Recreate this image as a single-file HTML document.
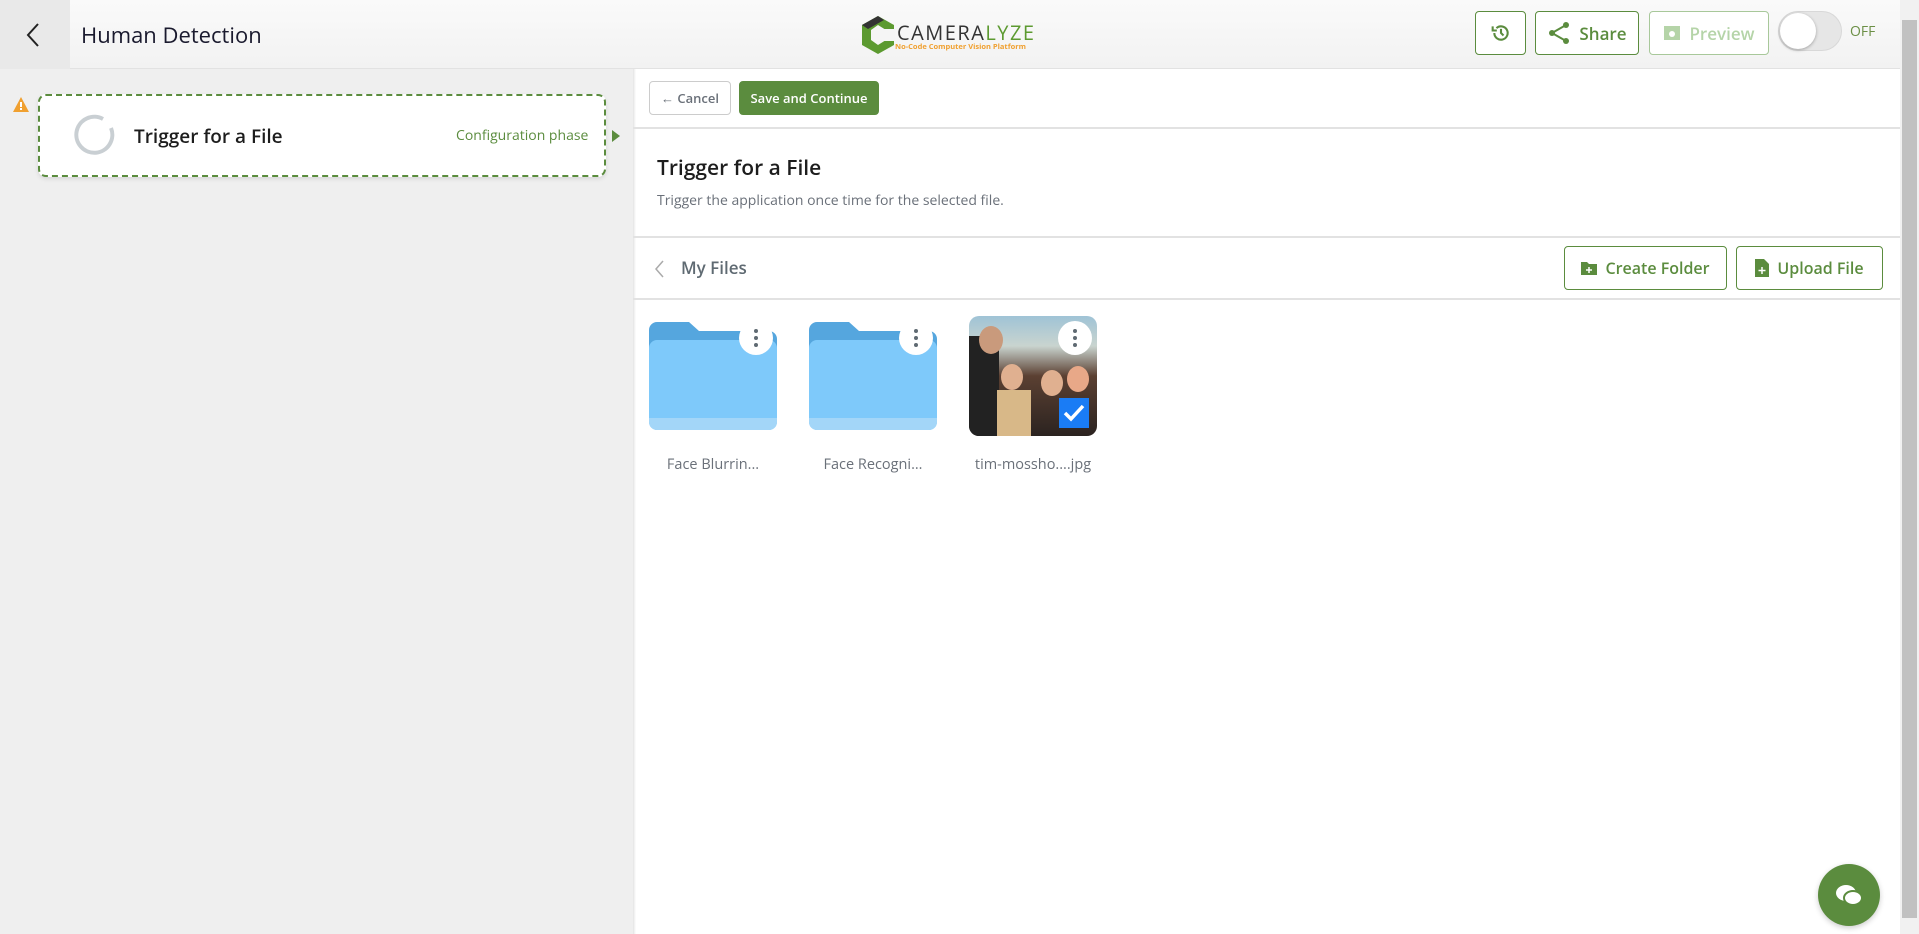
<!DOCTYPE html>
<html><head><meta charset="utf-8"><style>
*{box-sizing:border-box;margin:0;padding:0}
body{width:1919px;height:934px;overflow:hidden;font-family:"Open Sans","Liberation Sans",sans-serif;background:#fff;position:relative}
.abs{position:absolute}
.hdr{left:0;top:0;width:1900px;height:69px;background:linear-gradient(#fafafa,#f2f2f2);border-bottom:1px solid #e2e2e2}
.btn{position:absolute;border:1.5px solid #5b8c3e;border-radius:4px;background:#fff;color:#5b8c3e;font-weight:600;font-size:17px;display:flex;align-items:center;justify-content:center;gap:8px}
.folder{position:absolute;width:128px;height:108px}
.dots{position:absolute;width:34px;height:34px;border-radius:50%;background:#fff;display:flex;flex-direction:column;align-items:center;justify-content:center;gap:3px}
.dots i{width:4px;height:4px;border-radius:50%;background:#5f6a72;display:block}
.lbl{position:absolute;width:128px;text-align:center;font-size:14.5px;color:#6a7079;top:455px}
</style></head><body>
<div class="abs hdr"></div>
<div class="abs" style="left:0;top:0;width:70px;height:69px;background:#e9e9e9"></div>
<svg class="abs" style="left:24px;top:22px" width="18" height="26"><path d="M14 2 L4 13 L14 24" stroke="#222" stroke-width="2" fill="none"/></svg>
<div class="abs" style="left:81px;top:20px;font-size:22px;color:#1a1a2e">Human Detection</div>
<!-- logo -->
<svg class="abs" style="left:861px;top:15px" width="34" height="40"><polygon points="17,1 33,10 33,30 17,39 1,30 1,10" fill="#5c9a30"/><polygon points="1,10 17,1 23,5 7,14" fill="#333"/><polygon points="17,10 25,15 25,25 17,30 10,25 10,15" fill="#f5f5f5"/><rect x="21" y="14" width="13" height="12" fill="#f5f5f5"/></svg>
<div class="abs" style="left:897px;top:19px;font-size:20px;letter-spacing:1.5px;color:#333">CAMERA<span style="color:#5c9a30">LYZE</span></div>
<div class="abs" style="left:895px;top:42px;font-size:7.5px;color:#f0a030;font-weight:700">No-Code Computer Vision Platform</div>
<div class="btn" style="left:1475px;top:11px;width:51px;height:44px"><svg width="20" height="20" viewBox="0 0 24 24"><path d="M4 12a8 8 0 1 0 2.5-5.8" fill="none" stroke="#5b8c3e" stroke-width="2.5"/><path d="M2 4v5h5" fill="none" stroke="#5b8c3e" stroke-width="2.5"/><path d="M12 7v5l3 3" fill="none" stroke="#5b8c3e" stroke-width="2.5"/></svg></div>
<div class="btn" style="left:1535px;top:11px;width:104px;height:44px"><svg width="24" height="24" viewBox="0 0 24 24"><circle cx="19" cy="4" r="3" fill="#5b8c3e"/><circle cx="5" cy="12" r="3" fill="#5b8c3e"/><circle cx="19" cy="20" r="3" fill="#5b8c3e"/><path d="M19 4L5 12L19 20" stroke="#5b8c3e" stroke-width="2" fill="none"/></svg>Share</div>
<div class="btn" style="left:1649px;top:11px;width:120px;height:44px;border-color:#a8c89a;color:#b5d4a8"><svg width="18" height="18"><rect x="1" y="2" width="16" height="14" fill="#b5d4a8"/><circle cx="9" cy="10" r="3" fill="#fff"/></svg>Preview</div>
<div class="abs" style="left:1778px;top:11px;width:64px;height:40px;border-radius:20px;background:#e6e6e6;border:1px solid #d8d8d8"></div>
<div class="abs" style="left:1780px;top:13px;width:36px;height:36px;border-radius:50%;background:#fff;box-shadow:0 1px 3px rgba(0,0,0,.3)"></div>
<div class="abs" style="left:1850px;top:22px;font-size:14px;color:#6b8f45">OFF</div>
<!-- scrollbar -->
<div class="abs" style="left:1900px;top:0;width:19px;height:934px;background:#f1f1f1"></div>
<div class="abs" style="left:1902px;top:20px;width:15px;height:898px;background:#c1c1c1"></div>
<!-- left panel -->
<div class="abs" style="left:0;top:69px;width:633px;height:865px;background:#efefef"></div>
<div class="abs" style="left:38px;top:94px;width:568px;height:83px;background:#fff;border:2px dashed #5b8c3e;border-radius:8px;box-shadow:0 2px 4px rgba(0,0,0,.1)"></div>
<svg class="abs" style="left:12px;top:96px" width="18" height="17"><polygon points="9,1 17,16 1,16" fill="#f0a030"/><rect x="8" y="6" width="2" height="5" fill="#fff"/><rect x="8" y="12" width="2" height="2" fill="#fff"/></svg>
<svg class="abs" style="left:73px;top:114px" width="44" height="44"><path d="M30 5 A18 18 0 1 0 38 14" stroke="#c9cfd3" stroke-width="4" fill="none"/></svg>
<div class="abs" style="left:134px;top:123px;font-size:19px;font-weight:600;color:#1d1d1d">Trigger for a File</div>
<div class="abs" style="left:456px;top:126px;font-size:14px;color:#5b8c3e">Configuration phase</div>
<svg class="abs" style="left:612px;top:130px" width="8" height="12"><polygon points="0,0 8,6 0,12" fill="#5b8c3e"/></svg>
<!-- right -->
<div class="abs" style="left:633px;top:69px;width:3px;height:865px;background:linear-gradient(90deg,#e4e4e4,#fff)"></div>
<div class="btn" style="left:649px;top:81px;width:82px;height:34px;border:1px solid #ccc;color:#6a7079;font-size:13px;gap:5px">← Cancel</div>
<div class="btn" style="left:739px;top:81px;width:140px;height:34px;background:#5b8c3e;color:#fff;font-size:13px">Save and Continue</div>
<div class="abs" style="left:633px;top:127px;width:1267px;height:2px;background:#e2e2e2"></div>
<div class="abs" style="left:657px;top:154px;font-size:21px;font-weight:600;color:#1d1d1d">Trigger for a File</div>
<div class="abs" style="left:657px;top:191px;font-size:14px;color:#6a7079">Trigger the application once time for the selected file.</div>
<div class="abs" style="left:633px;top:236px;width:1267px;height:2px;background:#e2e2e2"></div>
<svg class="abs" style="left:653px;top:259px" width="12" height="20"><path d="M10 2L3 10L10 18" stroke="#aaa" stroke-width="1.5" fill="none"/></svg>
<div class="abs" style="left:681px;top:256px;font-size:17px;font-weight:600;color:#5f6a72">My Files</div>
<div class="btn" style="left:1564px;top:246px;width:163px;height:44px;font-size:16px"><svg width="16" height="14"><path d="M0 1h6l2 2h8v11H0z" fill="#5b8c3e"/><path d="M8 6v6M5 9h6" stroke="#fff" stroke-width="1.5"/></svg>Create Folder</div>
<div class="btn" style="left:1736px;top:246px;width:147px;height:44px;font-size:16px"><svg width="14" height="18"><path d="M0 0h9l5 5v13H0z" fill="#5b8c3e"/><path d="M7 8v7M3.5 11.5h7" stroke="#fff" stroke-width="1.5"/></svg>Upload File</div>
<div class="abs" style="left:633px;top:298px;width:1267px;height:2px;background:#e2e2e2"></div>
<!-- folders -->
<svg class="folder" style="left:649px;top:322px" viewBox="0 0 128 108"><path d="M0 8a8 8 0 0 1 8-8h32l10 9h70a8 8 0 0 1 8 8v80H0z" fill="#55a6de"/><path d="M0 26a8 8 0 0 1 8-8h112a8 8 0 0 1 8 8v74a8 8 0 0 1-8 8H8a8 8 0 0 1-8-8z" fill="#7ec9fa"/><path d="M0 96h128v4a8 8 0 0 1-8 8H8a8 8 0 0 1-8-8z" fill="#a3d6f8"/></svg>
<div class="dots" style="left:739px;top:321px"><i></i><i></i><i></i></div>
<svg class="folder" style="left:809px;top:322px" viewBox="0 0 128 108"><path d="M0 8a8 8 0 0 1 8-8h32l10 9h70a8 8 0 0 1 8 8v80H0z" fill="#55a6de"/><path d="M0 26a8 8 0 0 1 8-8h112a8 8 0 0 1 8 8v74a8 8 0 0 1-8 8H8a8 8 0 0 1-8-8z" fill="#7ec9fa"/><path d="M0 96h128v4a8 8 0 0 1-8 8H8a8 8 0 0 1-8-8z" fill="#a3d6f8"/></svg>
<div class="dots" style="left:899px;top:321px"><i></i><i></i><i></i></div>
<div class="abs" style="left:969px;top:316px;width:128px;height:120px;border-radius:10px;overflow:hidden;background:linear-gradient(#9fc3d6 0%,#c9d4cf 25%,#5b4032 50%,#2b2320 100%)">
<div class="abs" style="left:0;top:20px;width:30px;height:100px;background:#222"></div>
<div class="abs" style="left:10px;top:10px;width:24px;height:28px;border-radius:50%;background:#c99a7c"></div>
<div class="abs" style="left:28px;top:74px;width:34px;height:46px;background:#d8b888"></div>
<div class="abs" style="left:32px;top:48px;width:22px;height:26px;border-radius:50%;background:#e0b090"></div>
<div class="abs" style="left:72px;top:54px;width:22px;height:26px;border-radius:50%;background:#e0b090"></div>
<div class="abs" style="left:98px;top:50px;width:22px;height:26px;border-radius:50%;background:#e8a888"></div>
</div>
<div class="dots" style="left:1058px;top:321px"><i></i><i></i><i></i></div>
<div class="abs" style="left:1059px;top:398px;width:30px;height:30px;background:#1a7cf5;display:flex;align-items:center;justify-content:center"><svg width="22" height="18"><path d="M2 9l6 6L20 2" stroke="#fff" stroke-width="3.5" fill="none"/></svg></div>
<div class="lbl" style="left:649px">Face Blurrin...</div>
<div class="lbl" style="left:809px">Face Recogni...</div>
<div class="lbl" style="left:969px">tim-mossho....jpg</div>
<!-- chat -->
<div class="abs" style="left:1818px;top:864px;width:62px;height:62px;border-radius:50%;background:#5b8c3e;display:flex;align-items:center;justify-content:center;box-shadow:0 2px 6px rgba(0,0,0,.2)"><svg width="30" height="26"><ellipse cx="12" cy="11" rx="10" ry="8" fill="#fff"/><ellipse cx="19" cy="16" rx="9" ry="7" fill="#fff" stroke="#5b8c3e" stroke-width="2"/></svg></div>
</body></html>
